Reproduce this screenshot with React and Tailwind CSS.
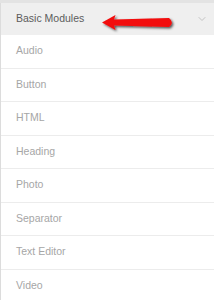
import { ChevronDown } from "lucide-react"

const modules = ["Audio", "Button", "HTML", "Heading", "Photo", "Separator", "Text Editor", "Video"]

function RedArrow() {
    return (
        <svg className="absolute left-[98px] top-[9px]" width="80" height="24" viewBox="0 0 80 24">
            <defs>
                <filter id="arrowShadow" x="-10%" y="-30%" width="130%" height="170%">
                    <feDropShadow dx="1.5" dy="1.5" stdDeviation="1" floodColor="#000" floodOpacity="0.65" />
                </filter>
            </defs>
            <path
                d="M3 10.5 L16.5 3 L15 7.5 L70 6 Q75.5 10.5 70 15 L15 13.5 L16.5 18 Z"
                fill="#f20d0d"
                filter="url(#arrowShadow)"
            />
        </svg>
    )
}

export default function App() {
    return (
        <div className="w-[214px] h-[300px] overflow-hidden bg-white font-['Liberation_Sans',Arial,sans-serif]">
            <div className="h-[3px] bg-[#e3e3e3]" />
            <div className="border-l border-[#dcdcdc]">
                <div className="relative flex items-center justify-between h-[32px] bg-[#efefef] pl-[15px] pr-[6px] text-[10.5px] text-[#5c5c5c]">
                    <span>Basic Modules</span>
                    <ChevronDown size={12} strokeWidth={1.75} className="text-[#bcbcbc]" />
                    <RedArrow />
                </div>
                {modules.map((name) => (
                    <div
                        key={name}
                        className="flex items-center h-[33.5px] pl-[15px] border-b border-[#ececec] text-[10.5px] text-[#a6a6a6]"
                    >
                        {name}
                    </div>
                ))}
            </div>
        </div>
    )
}
